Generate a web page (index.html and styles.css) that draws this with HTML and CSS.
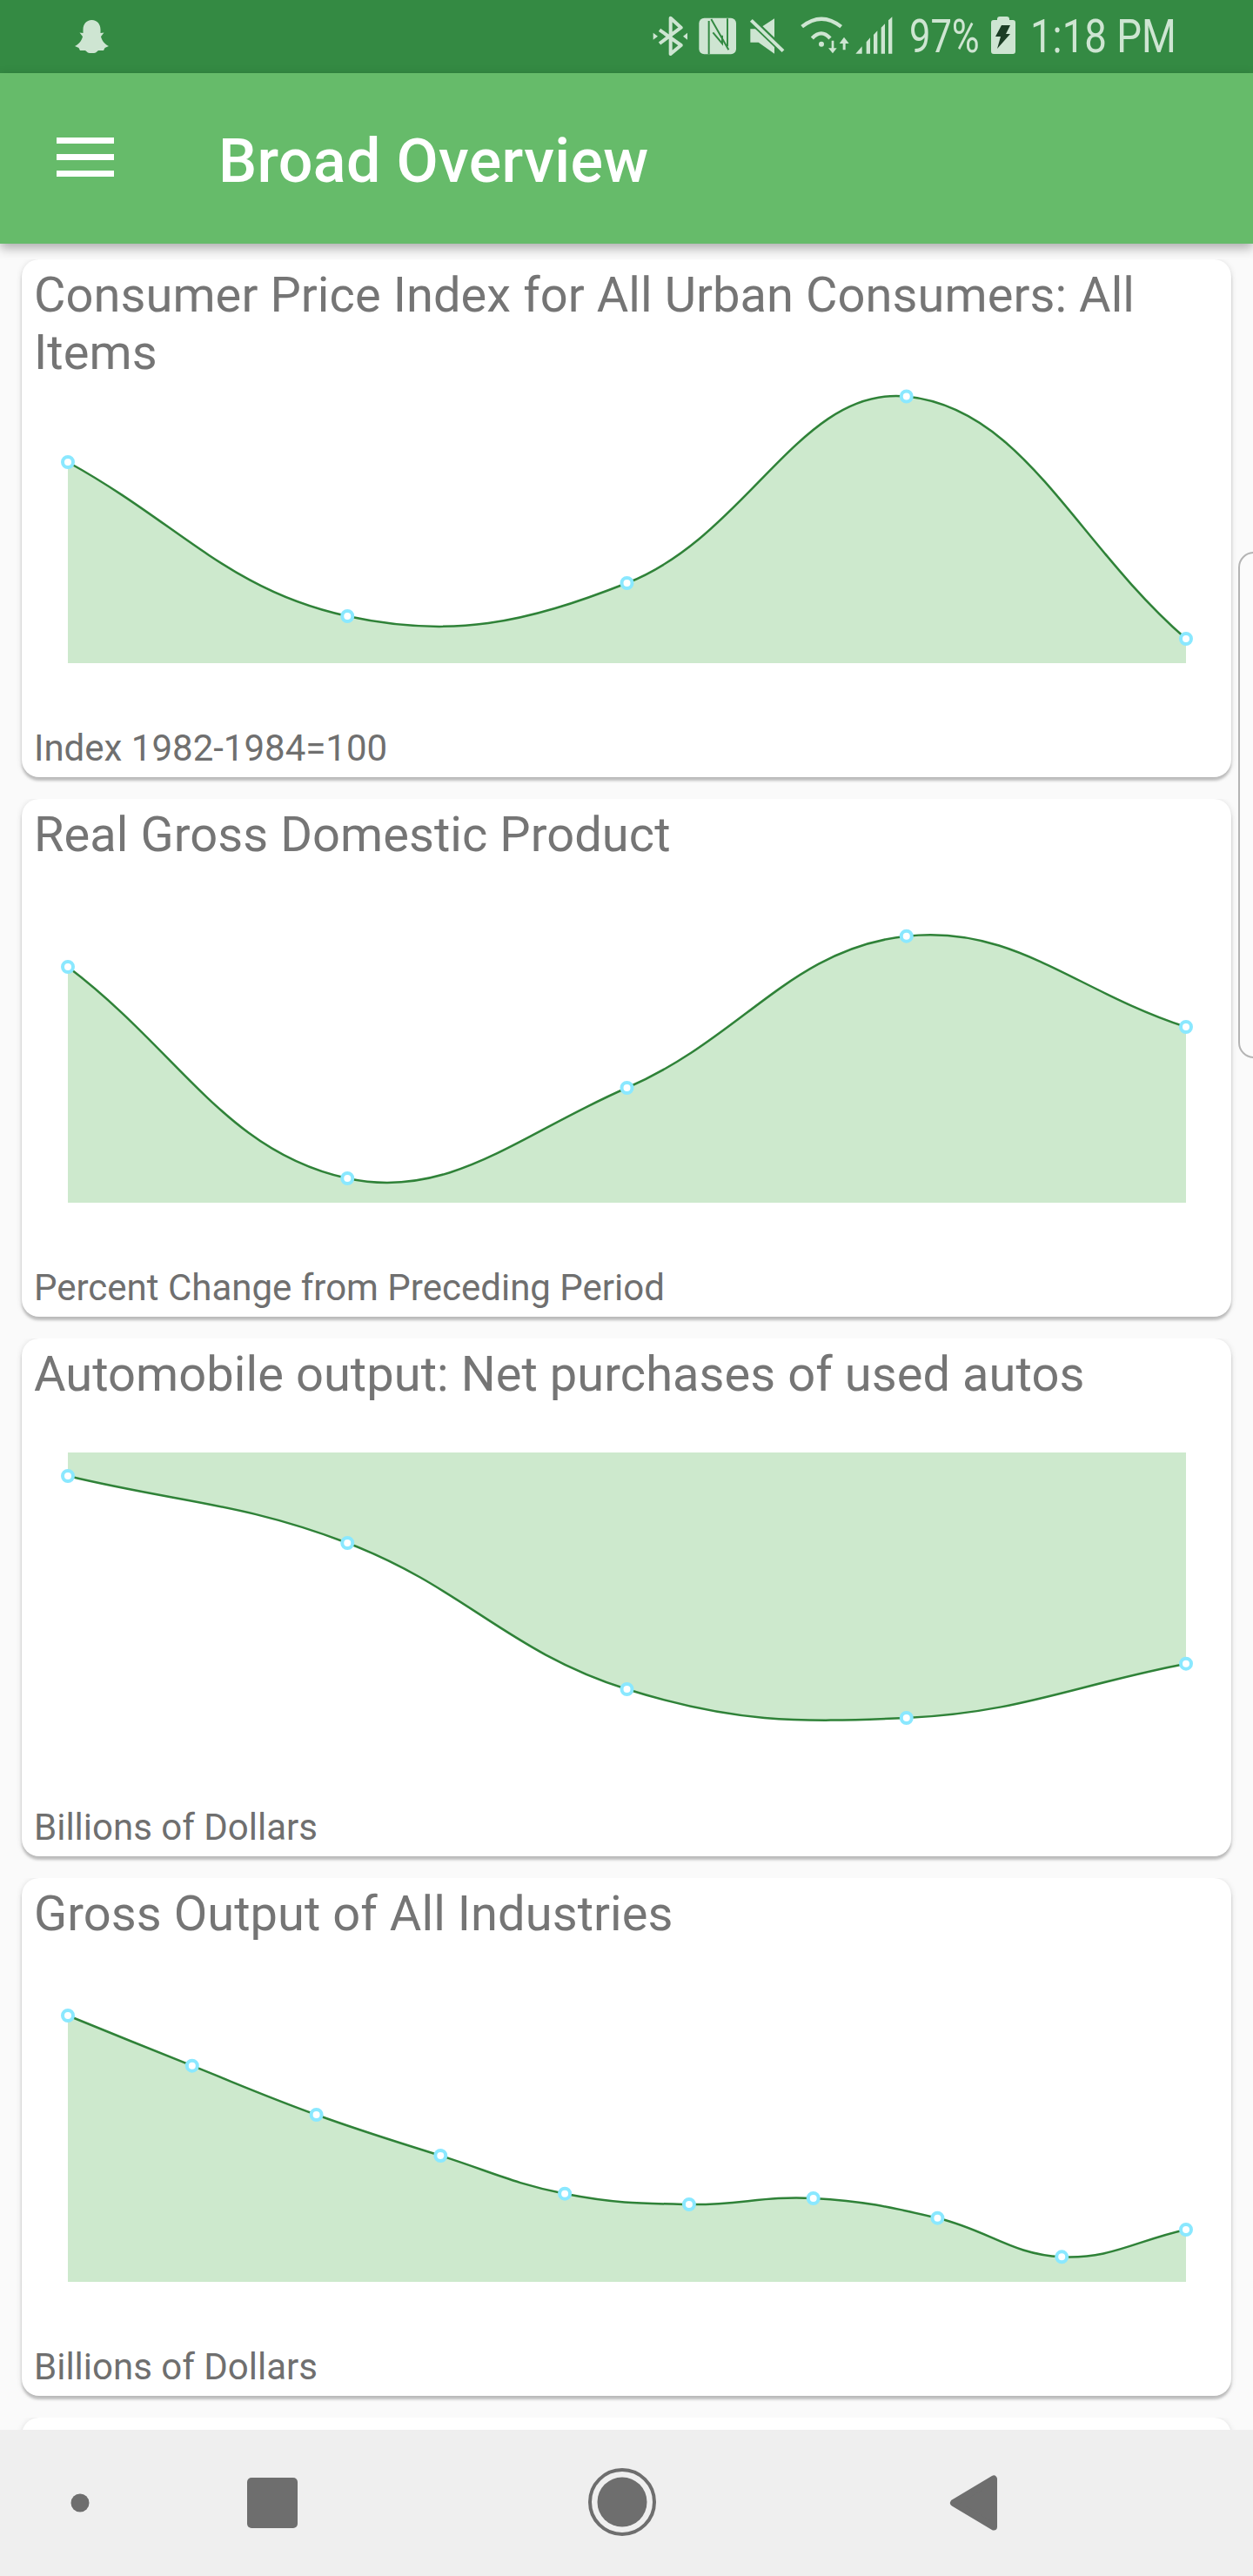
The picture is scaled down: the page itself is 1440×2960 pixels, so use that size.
FILE: index.html
```html
<!DOCTYPE html>
<html lang="en">
<head>
<meta charset="utf-8">
<title>Broad Overview</title>
<link rel="stylesheet" href="styles.css">
</head>
<body>
<div class="screen">
  <header class="status-bar">
    <svg class="ghost" viewBox="0 0 39 38" aria-hidden="true"><path class="st-light" d="M19.5 0C26 0 29.5 5 29.5 11L29.5 15L33.5 14.5L30 19C31 24 35 28 39 30L34.5 32L33 35L27 35L24 37.5C21 38.5 18 38.5 15 37.5L12 35L6 35L4.5 32L0 30C4 28 8 24 9 19L5.5 14.5L9.5 15L9.5 11C9.5 5 13 0 19.5 0Z"/></svg>
    <svg class="status-icons" viewBox="0 0 900 255" aria-hidden="true">
      <path class="st-line" d="M84 103L158 156L122 186V62L158 95L84 150"/>
      <path class="st-light" d="M62 113L78 125L62 137ZM180 113L165 125L180 137Z"/>
      <rect class="st-light" x="220" y="62" width="128" height="125" rx="18"/>
      <path class="st-cut" d="M254 187V72M262 66L322 172M318 64V160M268 112L300 150V122"/>
      <path class="st-light" d="M397 100H425L480 64V185L425 146H397Z"/>
      <path class="st-gap" d="M392 62L520 184"/>
      <path class="st-bar" d="M400 70L510 176"/>
      <path class="st-wave" d="M575 92Q642 38 710 92M610 132Q642 98 672 132"/>
      <circle class="st-light" cx="642" cy="152" r="9"/>
      <path class="st-light" d="M677 140H685V166H695L681 184L666 166H677ZM720 128L737 150H725V172H716V150H704Z"/>
      <path class="st-light" d="M760 185L782 160V185ZM797 185V145L810 130V185ZM822 185V120L835 106V185ZM848 185V95L861 82V185ZM873 185V70L886 58V185Z"/>
    </svg>
    <span class="st-text st-pct">97%</span>
    <svg class="battery" viewBox="0 0 28 43" aria-hidden="true">
      <path class="st-light" d="M7 3Q7 0 10 0H18Q21 0 21 3V4H25Q28 4 28 7V40Q28 43 25 43H3Q0 43 0 40V7Q0 4 3 4H7Z"/>
      <path class="st-bolt" d="M12 10H22L17 20H22L7 37L11 23H5Z"/>
    </svg>
    <span class="st-text st-time">1:18 PM</span>
  </header>

  <div class="app-bar">
    <div class="burger"><span></span><span></span><span></span></div>
    <h1 class="app-title">Broad Overview</h1>
  </div>

  <main class="content">
    <div class="card-wrap">
      <section class="card">
        <h2 class="card-title">Consumer Price Index for All Urban Consumers: All Items</h2>
        <svg class="chart" viewBox="39 418 1362 360" aria-hidden="true">
          <path class="area" d="M78 531C206.5 601.8 262.8 678.5 399.25 708C519.7 734.1 603.3 716.1 720.5 670C860.3 615.1 919.5 443.3 1041.75 455.5C1176.4 468.9 1234.5 622.6 1363 734V762H78Z"/>
          <path class="line" d="M78 531C206.5 601.8 262.8 678.5 399.25 708C519.7 734.1 603.3 716.1 720.5 670C860.3 615.1 919.5 443.3 1041.75 455.5C1176.4 468.9 1234.5 622.6 1363 734"/>
          <g class="dots">
            <circle cx="78" cy="531" r="6"/><circle cx="399.25" cy="708" r="6"/><circle cx="720.5" cy="670" r="6"/><circle cx="1041.75" cy="455.5" r="6"/><circle cx="1363" cy="734" r="6"/>
          </g>
        </svg>
        <p class="card-unit">Index 1982-1984=100</p>
      </section>
    </div>

    <div class="card-wrap">
      <section class="card">
        <h2 class="card-title">Real Gross Domestic Product</h2>
        <svg class="chart" viewBox="39 1038 1362 360" aria-hidden="true">
          <path class="area" d="M78 1111C206.5 1208.2 259.45 1323.8 399.25 1354C516.45 1379.4 597.1 1303.5 720.5 1250C854.1 1192.1 908.15 1090.3 1041.75 1075.7C1165.15 1062.3 1234.5 1138.3 1363 1180V1382H78Z"/>
          <path class="line" d="M78 1111C206.5 1208.2 259.45 1323.8 399.25 1354C516.45 1379.4 597.1 1303.5 720.5 1250C854.1 1192.1 908.15 1090.3 1041.75 1075.7C1165.15 1062.3 1234.5 1138.3 1363 1180"/>
          <g class="dots">
            <circle cx="78" cy="1111" r="6"/><circle cx="399.25" cy="1354" r="6"/><circle cx="720.5" cy="1250" r="6"/><circle cx="1041.75" cy="1075.7" r="6"/><circle cx="1363" cy="1180" r="6"/>
          </g>
        </svg>
        <p class="card-unit">Percent Change from Preceding Period</p>
      </section>
    </div>

    <div class="card-wrap">
      <section class="card">
        <h2 class="card-title">Automobile output: Net purchases of used autos</h2>
        <svg class="chart" viewBox="39 1658 1362 360" aria-hidden="true">
          <path class="area" d="M78 1696C206.5 1726.8 276.75 1726.3 399.25 1773C533.75 1824.3 584.5 1898.5 720.5 1941C841.5 1978.9 914.05 1979.8 1041.75 1974C1171.05 1968.1 1234.5 1936.6 1363 1911.7V1669H78Z"/>
          <path class="line" d="M78 1696C206.5 1726.8 276.75 1726.3 399.25 1773C533.75 1824.3 584.5 1898.5 720.5 1941C841.5 1978.9 914.05 1979.8 1041.75 1974C1171.05 1968.1 1234.5 1936.6 1363 1911.7"/>
          <g class="dots">
            <circle cx="78" cy="1696" r="6"/><circle cx="399.25" cy="1773" r="6"/><circle cx="720.5" cy="1941" r="6"/><circle cx="1041.75" cy="1974" r="6"/><circle cx="1363" cy="1911.7" r="6"/>
          </g>
        </svg>
        <p class="card-unit">Billions of Dollars</p>
      </section>
    </div>

    <div class="card-wrap">
      <section class="card">
        <h2 class="card-title">Gross Output of All Industries</h2>
        <svg class="chart" viewBox="39 2278 1362 360" aria-hidden="true">
          <path class="area" d="M78 2316C135.1 2339.1 163.6 2350.9 220.8 2373.7C277.8 2396.5 305.9 2409.1 363.6 2430C420.1 2450.4 449 2458.8 506.3 2477C563.2 2495.1 590.8 2509.3 649.1 2520.7C705.1 2531.7 734.7 2531.9 791.9 2533C848.9 2534.1 877.9 2522.9 934.7 2526C992.1 2529.2 1021.3 2535.5 1077.4 2548.7C1135.5 2562.4 1162.4 2590.6 1220.2 2593.3C1276.7 2595.9 1305.9 2574.5 1363 2562V2622H78Z"/>
          <path class="line" d="M78 2316C135.1 2339.1 163.6 2350.9 220.8 2373.7C277.8 2396.5 305.9 2409.1 363.6 2430C420.1 2450.4 449 2458.8 506.3 2477C563.2 2495.1 590.8 2509.3 649.1 2520.7C705.1 2531.7 734.7 2531.9 791.9 2533C848.9 2534.1 877.9 2522.9 934.7 2526C992.1 2529.2 1021.3 2535.5 1077.4 2548.7C1135.5 2562.4 1162.4 2590.6 1220.2 2593.3C1276.7 2595.9 1305.9 2574.5 1363 2562"/>
          <g class="dots">
            <circle cx="78" cy="2316" r="6"/><circle cx="220.8" cy="2373.7" r="6"/><circle cx="363.6" cy="2430" r="6"/><circle cx="506.3" cy="2477" r="6"/><circle cx="649.1" cy="2520.7" r="6"/><circle cx="791.9" cy="2533" r="6"/><circle cx="934.7" cy="2526" r="6"/><circle cx="1077.4" cy="2548.7" r="6"/><circle cx="1220.2" cy="2593.3" r="6"/><circle cx="1363" cy="2562" r="6"/>
          </g>
        </svg>
        <p class="card-unit">Billions of Dollars</p>
      </section>
    </div>

    <div class="card-wrap">
      <section class="card"></section>
    </div>

    <div class="edge-handle"></div>
  </main>

  <nav class="nav-bar">
    <svg class="nav-dot" viewBox="0 0 22 22" aria-hidden="true"><circle class="nav-shape" cx="11" cy="11" r="10.5"/></svg>
    <svg class="nav-square" viewBox="0 0 58 58" aria-hidden="true"><rect class="nav-shape" width="58" height="58" rx="5"/></svg>
    <svg class="nav-home" viewBox="0 0 78 78" aria-hidden="true"><circle class="nav-ring" cx="39" cy="39" r="37"/><circle class="nav-shape" cx="39" cy="39" r="28.5"/></svg>
    <svg class="nav-back" viewBox="0 0 55 64" aria-hidden="true"><polygon class="nav-tri" points="5,32 51,4.5 51,59.5"/></svg>
  </nav>
</div>
</body>
</html>
```

FILE: styles.css
```css
* { box-sizing: border-box; }

html, body {
  margin: 0;
  padding: 0;
  background: #fafafa;
}

.screen {
  width: 1440px;
  height: 2960px;
  display: flex;
  flex-direction: column;
  overflow: hidden;
  font-family: Roboto, "Liberation Sans", sans-serif;
}

/* status bar */
.status-bar {
  height: 84px;
  flex: none;
  display: flex;
  align-items: center;
  background: #348a43;
}
.ghost {
  width: 39px;
  height: 38px;
  margin-left: 86px;
  margin-top: -1px;
}
.status-icons {
  width: 300px;
  height: 85px;
  margin-left: 605px;
}
.st-light { fill: #cee5d2; }
.st-line { fill: none; stroke: #cee5d2; stroke-width: 12; stroke-linejoin: round; }
.st-cut { fill: none; stroke: #348a43; stroke-width: 6; }
.st-gap { fill: none; stroke: #348a43; stroke-width: 24; }
.st-bar { fill: none; stroke: #cee5d2; stroke-width: 12; }
.st-wave { fill: none; stroke: #cee5d2; stroke-width: 13; }
.st-bolt { fill: #1c3d25; }
.st-text {
  display: block;
  font-size: 53px;
  font-weight: 400;
  color: #cee5d2;
  white-space: nowrap;
  transform-origin: left center;
}
.st-pct { width: 81px; margin-left: 15px; transform: scaleX(0.82); }
.battery { width: 28px; height: 43px; margin-left: 13px; margin-top: -3px; }
.st-time { width: 164px; margin-left: 17px; transform: scaleX(0.86); }

/* app bar */
.app-bar {
  height: 196px;
  flex: none;
  display: flex;
  align-items: center;
  padding-left: 65px;
  background: #66bb6a;
  box-shadow: 0 5px 12px rgba(0, 0, 0, 0.32);
  position: relative;
  z-index: 2;
}
.burger {
  width: 66px;
  display: flex;
  flex-direction: column;
  gap: 12px;
  margin-bottom: 3px;
}
.burger span {
  display: block;
  height: 7px;
  background: #fff;
}
.app-title {
  margin: 6px 0 0 120px;
  font-size: 70px;
  font-weight: 500;
  letter-spacing: 0.35px;
  color: #fff;
  white-space: nowrap;
}

/* content */
.content {
  flex: 1;
  position: relative;
  overflow: hidden;
  padding-top: 18px;
  background: #fafafa;
}
.card-wrap {
  height: 602px;
  margin-bottom: 18px;
  padding: 0 25px;
  overflow: hidden;
}
.card {
  height: 595px;
  display: flex;
  flex-direction: column;
  padding: 8px 14px 9px;
  background: #fff;
  border-radius: 20px;
  box-shadow: 0 4px 3px rgba(0, 0, 0, 0.2), 0 1px 7px rgba(0, 0, 0, 0.13);
}
.card-title {
  height: 112px;
  margin: 0;
  font-size: 56px;
  font-weight: 400;
  letter-spacing: 0.07px;
  color: #757575;
}
.chart {
  display: block;
  width: 1362px;
  height: 360px;
  flex: none;
}
.area { fill: #cde9cd; }
.line { fill: none; stroke: #2f8238; stroke-width: 2.5; }
.dots circle { fill: #fff; stroke: #8ae8ff; stroke-width: 4; }
.card-unit {
  margin: auto 0 0;
  font-size: 42px;
  color: #6f6f6f;
}

.edge-handle {
  position: absolute;
  left: 1423px;
  top: 354px;
  width: 40px;
  height: 582px;
  border: 2px solid #b4b4b4;
  border-radius: 18px;
  background: rgba(255, 255, 255, 0.25);
}

/* navigation bar */
.nav-bar {
  height: 168px;
  flex: none;
  display: flex;
  align-items: center;
  padding-left: 81px;
  background: #efefef;
  position: relative;
  z-index: 2;
}
.nav-shape { fill: #6e6e6e; }
.nav-ring { fill: none; stroke: #6e6e6e; stroke-width: 4; }
.nav-tri { fill: #6e6e6e; stroke: #6e6e6e; stroke-width: 8; stroke-linejoin: round; }
.nav-dot { width: 22px; height: 22px; }
.nav-square { width: 58px; height: 58px; margin-left: 181px; }
.nav-home { width: 78px; height: 78px; margin-left: 334px; margin-top: -2px; }
.nav-back { width: 55px; height: 64px; margin-left: 337px; }
```
